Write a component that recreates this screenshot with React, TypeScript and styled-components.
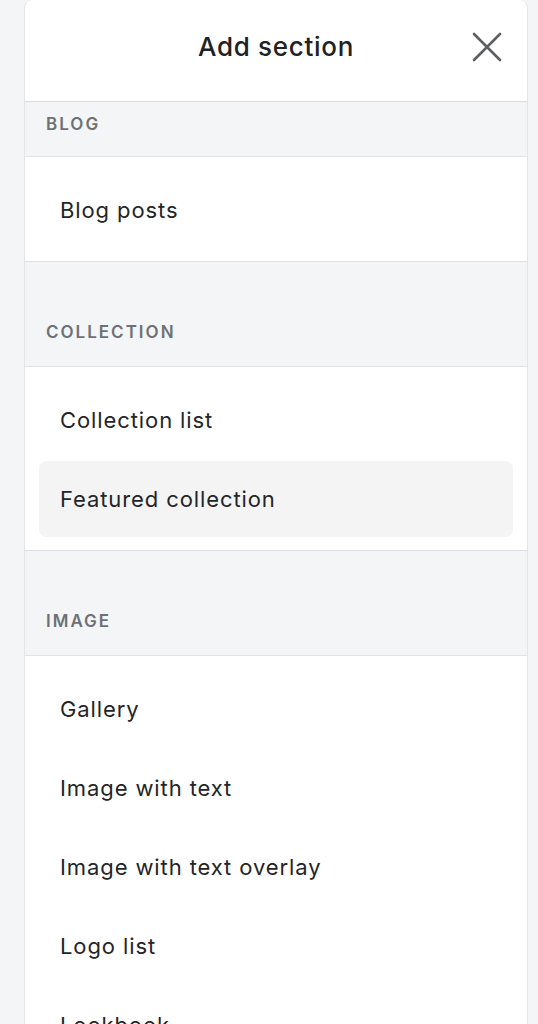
import { createGlobalStyle } from "styled-components";
import styled from "styled-components";

const GlobalStyle = createGlobalStyle`
  html, body {
    margin: 0;
    padding: 0;
    background: #f4f5f7;
  }
  body {
    font-family: Inter, "Noto Sans", sans-serif;
    -webkit-font-smoothing: antialiased;
  }
`;

const Page = styled.div`
  height: 1024px;
  overflow: hidden;
  padding: 0 10px 0 24px;
`;

const Panel = styled.div`
  background: #ffffff;
  border-left: 1px solid #e3e5e8;
  border-right: 1px solid #e3e5e8;
  border-radius: 8px 8px 0 0;
  min-height: 1024px;
`;

const Header = styled.header`
  position: relative;
  height: 101px;
  display: flex;
  align-items: center;
  justify-content: center;
  border-bottom: 1px solid #d9dbdf;
`;

const Title = styled.h1`
  margin: 0 0 8px;
  font-size: 26px;
  font-weight: 500;
  color: #202223;
  letter-spacing: 0.7px;
`;

const CloseButton = styled.button`
  position: absolute;
  right: 24px;
  top: 31px;
  width: 32px;
  height: 32px;
  padding: 0;
  border: none;
  background: transparent;
  display: flex;
  align-items: center;
  justify-content: center;
  color: #5c5f62;
`;

const GroupHeader = styled.div<{ $first?: boolean }>`
  background: #f4f5f7;
  padding: ${(p) => (p.$first ? "15px 21px 25px" : "63px 21px 27px")};
  border-bottom: 1px solid #e1e3e5;
  font-size: 17px;
  font-weight: 600;
  letter-spacing: 2px;
  line-height: 14px;
  color: #6d7175;
  text-transform: uppercase;
`;

const GroupList = styled.div`
  display: flex;
  flex-direction: column;
  gap: 3px;
  padding: 15px 14px 13px;
  border-bottom: 1px solid #dcdfe3;
  box-shadow: 0 1px 1px rgba(0, 0, 0, 0.04);
`;

const Item = styled.div<{ $active?: boolean }>`
  height: 76px;
  display: flex;
  align-items: center;
  padding: 0 21px;
  border-radius: 8px;
  background: ${(p) => (p.$active ? "#f4f4f5" : "transparent")};
  font-size: 22px;
  letter-spacing: 0.9px;
  color: #242526;
`;

const groups = [
  { name: "Blog", items: ["Blog posts"] },
  { name: "Collection", items: ["Collection list", "Featured collection"] },
  {
    name: "Image",
    items: ["Gallery", "Image with text", "Image with text overlay", "Logo list", "Lookbook"],
  },
];

export default function App() {
  return (
    <>
      <GlobalStyle />
      <Page>
        <Panel>
          <Header>
            <Title>Add section</Title>
            <CloseButton aria-label="Close">
              <svg width="30" height="30" viewBox="0 0 30 30" fill="none">
                <path d="M2 2L28 28M28 2L2 28" stroke="currentColor" strokeWidth="2.6" strokeLinecap="round" />
              </svg>
            </CloseButton>
          </Header>
          {groups.map((g, i) => (
            <section key={g.name}>
              <GroupHeader $first={i === 0}>{g.name}</GroupHeader>
              <GroupList>
                {g.items.map((it) => (
                  <Item key={it} $active={it === "Featured collection"}>
                    {it}
                  </Item>
                ))}
              </GroupList>
            </section>
          ))}
        </Panel>
      </Page>
    </>
  );
}
